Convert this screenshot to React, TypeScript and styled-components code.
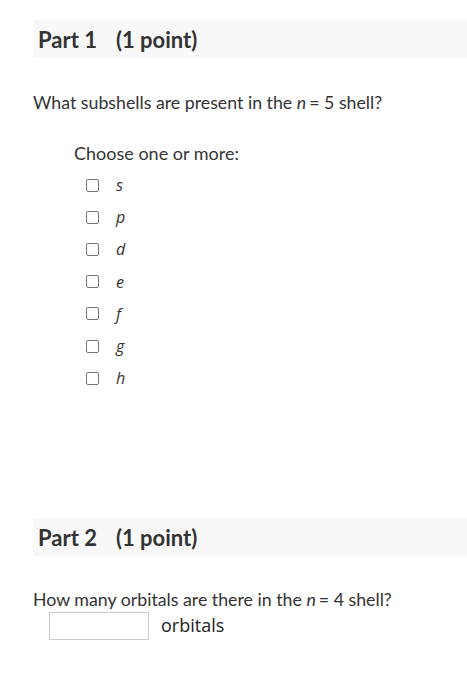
import React from "react";
import styled, { createGlobalStyle } from "styled-components";

const Global = createGlobalStyle`
  html, body { margin: 0; padding: 0; background: #ffffff; overflow: hidden; }
  body { font-family: Lato, "Liberation Sans", sans-serif; color: #333333; }
`;

const Page = styled.div`
  padding: 20px 0 0 33px;
  width: 434px;
`;

const PartHeader = styled.div`
  height: 38px;
  display: flex;
  align-items: center;
  padding-left: 5px;
  background: #f8f8f8;
  font-family: Lato, sans-serif;
  font-weight: 700;
  font-size: 22px;
  color: #333333;
`;

const Points = styled.span`
  margin-left: 19px;
`;

const Question = styled.p<{ $top: number }>`
  margin: ${(p) => p.$top}px 0 0 0;
  font-family: Lato, sans-serif;
  font-size: 17.75px;
  line-height: 24px;
  color: #333333;
`;

const Var = styled.i`
  font-family: Lato, sans-serif;
  margin-right: 3px;
`;

const Prompt = styled.div`
  margin: 27px 0 0 41px;
  font-family: Lato, sans-serif;
  font-size: 18px;
  line-height: 24px;
  color: #333333;
`;

const Options = styled.ul`
  list-style: none;
  margin: 4px 0 0 0;
  padding: 0 0 0 53px;
`;

const Option = styled.li`
  height: 32.2px;
  display: flex;
  align-items: center;
`;

const Box = styled.span`
  width: 11px;
  height: 11px;
  border: 1px solid #767676;
  border-radius: 2px;
  background: #fff;
  flex: none;
`;

const Label = styled.span`
  margin-left: 17px;
  font-family: "Open Sans", "Noto Sans", sans-serif;
  font-style: italic;
  font-size: 16px;
  color: #333333;
  line-height: 1;
`;

const Part2 = styled.div`
  margin-top: 124px;
`;

const AnswerRow = styled.div`
  display: flex;
  align-items: center;
  margin: 1px 0 0 16px;
`;

const Input = styled.input`
  box-sizing: border-box;
  width: 100px;
  height: 28px;
  border: 1px solid #cccccc;
  background: #fff;
  margin: 0;
  padding: 0 4px;
`;

const Unit = styled.span`
  margin-left: 12px;
  font-family: "Open Sans", "Noto Sans", sans-serif;
  font-size: 18px;
  color: #222222;
  position: relative;
  top: -1px;
`;

const subshells = ["s", "p", "d", "e", "f", "g", "h"];

export default function App() {
  return (
    <>
      <Global />
      <Page>
        <PartHeader>
          Part 1<Points>(1 point)</Points>
        </PartHeader>
        <Question $top={32}>
          What subshells are present in the <Var>n</Var>= 5 shell?
        </Question>
        <Prompt>Choose one or more:</Prompt>
        <Options>
          {subshells.map((s) => (
            <Option key={s}>
              <Box />
              <Label>{s}</Label>
            </Option>
          ))}
        </Options>
        <Part2>
          <PartHeader>
            Part 2<Points>(1 point)</Points>
          </PartHeader>
          <Question $top={31}>
            How many orbitals are there in the <Var>n</Var>= 4 shell?
          </Question>
          <AnswerRow>
            <Input type="text" />
            <Unit>orbitals</Unit>
          </AnswerRow>
        </Part2>
      </Page>
    </>
  );
}
